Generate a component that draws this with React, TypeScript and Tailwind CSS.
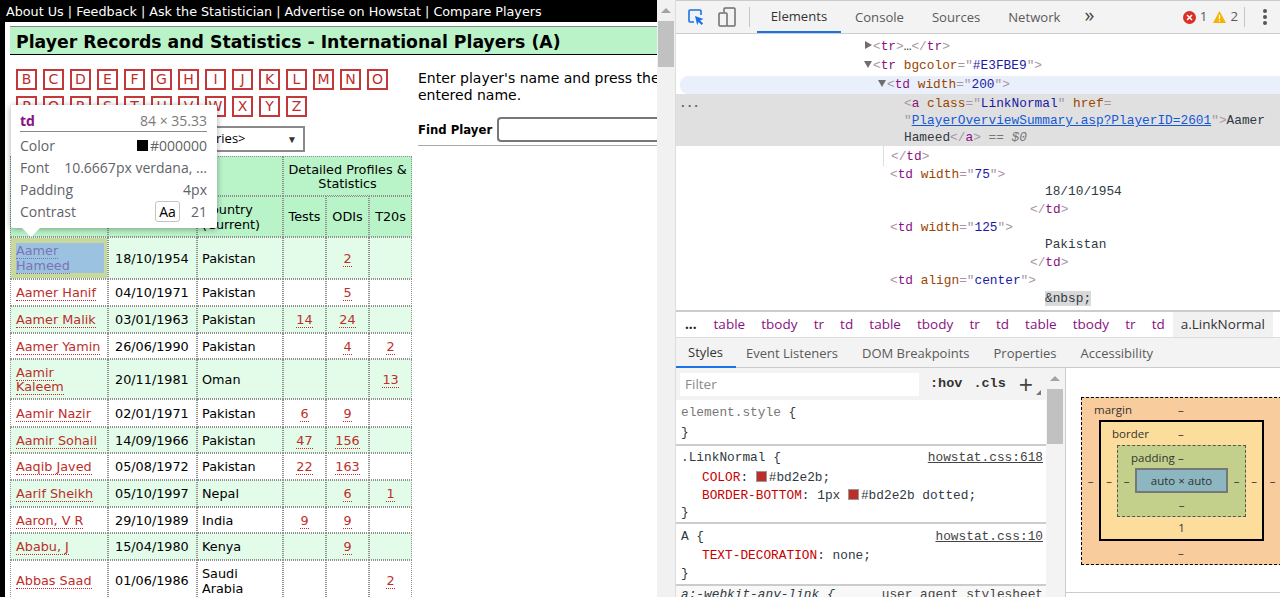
import React from "react";

const sans = "font-['DejaVu_Sans',sans-serif]";
const ui = "font-['Open_Sans',sans-serif]";
const mono = "font-['Liberation_Mono',monospace]";

const row1 = ["B","C","D","E","F","G","H","I","J","K","L","M","N","O"];
const row2 = ["P","Q","R","S","T","U","V","W","X","Y","Z"];

const rows: [string, string, string, string, string, string, string][] = [
  ["Aamer Hanif","04/10/1971","Pakistan","","5","","h-[27px]"],
  ["Aamer Malik","03/01/1963","Pakistan","14","24","","h-[27px]"],
  ["Aamer Yamin","26/06/1990","Pakistan","","4","2","h-[26px]"],
  ["Aamir Kaleem","20/11/1981","Oman","","","13","h-[40px]"],
  ["Aamir Nazir","02/01/1971","Pakistan","6","9","","h-[28px]"],
  ["Aamir Sohail","14/09/1966","Pakistan","47","156","","h-[26px]"],
  ["Aaqib Javed","05/08/1972","Pakistan","22","163","","h-[27px]"],
  ["Aarif Sheikh","05/10/1997","Nepal","","6","1","h-[27px]"],
  ["Aaron, V R","29/10/1989","India","9","9","","h-[26px]"],
  ["Ababu, J","15/04/1980","Kenya","","9","","h-[27px]"],
  ["Abbas Saad","01/06/1986","Saudi Arabia","","","2","h-[41px]"],
];

const cell = "border border-dotted border-[#909090] px-[4px] pt-[2px] pb-0 align-middle";

function L({ children }: { children: React.ReactNode }) {
  return <span className="text-[#bd2e2b] border-b border-dotted border-[#bd2e2b]">{children}</span>;
}

function Letter({ c }: { c: string }) {
  return (
    <span className="w-[21px] h-[21px] flex items-center justify-center border-2 border-[#c4383a] text-[#bd2e2b] text-[14px]">{c}</span>
  );
}

function Table() {
  return (
    <table className="table-fixed border-separate border-spacing-0 w-[402px] text-[12.8px] leading-[14.5px] text-black">
      <colgroup>
        <col className="w-[98px]" /><col className="w-[89px]" /><col className="w-[86px]" /><col className="w-[43px]" /><col className="w-[43px]" /><col className="w-[43px]" />
      </colgroup>
      <tbody>
        <tr className="bg-[#b9f3c8] h-[40px]">
          <td className={cell} colSpan={3}></td>
          <td className={cell + " text-center"} colSpan={3}>Detailed Profiles &amp; Statistics</td>
        </tr>
        <tr className="bg-[#b9f3c8] h-[41px]">
          <td className={cell}></td>
          <td className={cell}></td>
          <td className={cell}>Country (Current)</td>
          <td className={cell + " text-center"}>Tests</td>
          <td className={cell + " text-center"}>ODIs</td>
          <td className={cell + " text-center"}>T20s</td>
        </tr>
        <tr className="bg-[#e3fbe9] h-[42px]">
          <td className={cell + " !p-0"}>
            <div className="bg-[#c8d99b] pl-[5px] pr-[3px] py-[5px] h-[40px]">
              <div className="bg-[#9bc2e0] h-[30px] pt-[1px] text-[#7d72b8]"><span className="border-b border-dotted border-[#7d72b8]">Aamer</span><br /><span className="border-b border-dotted border-[#7d72b8]">Hameed</span></div>
            </div>
          </td>
          <td className={cell + " !pl-[6px]"}>18/10/1954</td>
          <td className={cell}>Pakistan</td>
          <td className={cell}></td>
          <td className={cell + " text-center"}><L>2</L></td>
          <td className={cell}></td>
        </tr>
        {rows.map((r, i) => (
          <tr key={r[0]} className={(i % 2 === 0 ? "bg-white " : "bg-[#e3fbe9] ") + r[6]}>
            <td className={cell + " !pl-[5px]"}><L>{r[0]}</L></td>
            <td className={cell + " !pl-[6px]"}>{r[1]}</td>
            <td className={cell}>{r[2]}</td>
            <td className={cell + " text-center"}>{r[3] && <L>{r[3]}</L>}</td>
            <td className={cell + " text-center"}>{r[4] && <L>{r[4]}</L>}</td>
            <td className={cell + " text-center"}>{r[5] && <L>{r[5]}</L>}</td>
          </tr>
        ))}
      </tbody>
    </table>
  );
}

function Tip() {
  const lbl = "text-[#5f6368]";
  return (
    <div className={`absolute left-[11px] top-[105px] w-[206px] h-[123px] bg-white rounded-[2px] shadow-[0_1px_6px_rgba(0,0,0,0.35)] pl-[9px] pr-[10px] pt-[4px] text-[14px] ${ui} z-10`}>
      <div className="flex justify-between items-center h-[23px] border-b border-[#8a8a8a]">
        <span className="font-bold text-[#881280]">td</span>
        <span className="text-[#7a7a7a]">84 × 35.33</span>
      </div>
      <div className="flex justify-between items-center h-[22px] mt-[2px]">
        <span className={lbl}>Color</span>
        <span className="flex items-center gap-[2px] text-[#5f6368]"><span className="w-[11px] h-[11px] bg-black inline-block" />#000000</span>
      </div>
      <div className="flex justify-between items-center h-[22px]">
        <span className={lbl}>Font</span>
        <span className="text-[#5f6368]">10.6667px verdana, ...</span>
      </div>
      <div className="flex justify-between items-center h-[22px]">
        <span className={lbl}>Padding</span>
        <span className="text-[#5f6368]">4px</span>
      </div>
      <div className="flex justify-between items-center h-[22px]">
        <span className={lbl}>Contrast</span>
        <span className="flex items-center gap-[11px] text-[#5f6368]"><span className="w-[25px] h-[21px] border border-[#c4c4c4] rounded-[3px] text-black flex items-center justify-center">Aa</span>21</span>
      </div>
      <div className="absolute left-[11px] top-[123px] w-0 h-0 border-l-[9px] border-r-[9px] border-t-[9px] border-l-transparent border-r-transparent border-t-white" />
    </div>
  );
}

function LeftPage() {
  return (
    <div className={`relative w-[657px] h-[597px] overflow-hidden bg-white ${sans}`}>
      <div className="bg-black text-white h-[22px] pl-[6px] text-[12.75px] leading-[23px] whitespace-nowrap">
        About Us | Feedback | Ask the Statistician | Advertise on Howstat | Compare Players
      </div>
      <div className="flex h-[575px]">
        <div className="w-[5px] bg-black shrink-0" />
        <div className="pl-[5px] pt-[4px] flex-1 min-w-0">
          <div className="h-[29px] bg-[#bbf3c9] border-t border-[#888] border-b border-b-black pl-[6px] font-bold text-[17.3px] leading-[31px] whitespace-nowrap overflow-hidden">
            Player Records and Statistics - International Players (A)
          </div>
          <div className="flex">
            <div className="w-[408px] shrink-0">
              <div className="pl-[6px] pt-[14px]">
                <div className="flex gap-[6px]">{row1.map((c) => <Letter key={c} c={c} />)}</div>
                <div className="flex gap-[6px] mt-[6px]">{row2.map((c) => <Letter key={c} c={c} />)}</div>
                <div className={`mt-[9px] w-[289px] h-[26px] border-2 border-[#8a8a8a] flex items-center justify-between pl-[4px] pr-[6px] text-[13px] whitespace-nowrap ${ui}`}>
                  <span className="pl-[194px]">ries&gt;</span>
                  <span className="text-[10px] text-[#333]">▼</span>
                </div>
              </div>
              <div className="mt-[4px]"><Table /></div>
            </div>
            <div className="flex-1 min-w-0 pt-[15px] text-[14px] leading-[17px] text-black whitespace-nowrap overflow-hidden">
              <div>Enter player's name and press the</div>
              <div>entered name.</div>
              <div className="flex items-center mt-[13px] pb-[3px] border-b border-[#aaa]">
                <span className="font-bold text-[11.7px] w-[79px] pt-[1px]">Find Player</span>
                <span className="flex-1 h-[25px] border-2 border-[#777] border-r-0 rounded-l-[4px]" />
              </div>
            </div>
          </div>
        </div>
      </div>
      <Tip />
    </div>
  );
}

function PageScroll() {
  return (
    <div className="w-[19px] shrink-0 bg-[#f1f1f1] border-r border-[#ddd] flex flex-col items-center">
      <div className="h-[21px] flex items-center justify-center">
        <div className="w-0 h-0 border-l-[5px] border-r-[5px] border-b-[5px] border-l-transparent border-r-transparent border-b-[#a3a3a3]" />
      </div>
      <div className="w-[16px] h-[46px] bg-[#c1c1c1]" />
    </div>
  );
}

function T({ c, children }: { c: string; children: React.ReactNode }) {
  return <span className={c}>{children}</span>;
}
const P = "text-[#a894a6]";
const N = "text-[#881280]";
const A = "text-[#994500]";
const V = "text-[#1a1aa6]";

function Tag({ name, attr, val, close }: { name: string; attr?: string; val?: string; close?: boolean }) {
  return (
    <>
      <T c={P}>{close ? "</" : "<"}</T><T c={N}>{name}</T>
      {attr && <> <T c={A}>{attr}</T><T c={P}>="</T><T c={V}>{val}</T><T c={P}>"</T></>}
      <T c={P}>&gt;</T>
    </>
  );
}

function Line({ cls, children }: { cls: string; children: React.ReactNode }) {
  return <div className={`h-[17.7px] leading-[17.7px] whitespace-nowrap ${cls}`}>{children}</div>;
}

const Tri = ({ open }: { open?: boolean }) => (
  <span className={`inline-block w-0 h-0 mr-[1px] align-[1px] ${open ? "border-l-[4.5px] border-r-[4.5px] border-t-[7px] border-l-transparent border-r-transparent border-t-[#6e6e6e]" : "border-t-[4.5px] border-b-[4.5px] border-l-[7px] border-t-transparent border-b-transparent border-l-[#6e6e6e]"}`} />
);

function Toolbar() {
  const tab = "px-[14px] h-full flex items-center text-[13.1px] text-[#5a5a5a] pt-[2px]";
  return (
    <div className={`h-[34px] border-t border-[#ccc] bg-[#f3f3f3] border-b border-b-[#ccc] flex items-center ${ui}`}>
      <div className="w-[73px] flex items-center gap-[13px] pl-[11px] h-full">
        <svg width="18" height="18" viewBox="0 0 18 18" fill="none">
          <path d="M7 14H3a1 1 0 0 1-1-1V3a1 1 0 0 1 1-1h10a1 1 0 0 1 1 1v4" stroke="#1a73e8" strokeWidth="1.6" />
          <path d="M8 8l8.5 3-3.4 1.4 3 3-1.5 1.5-3-3L10.2 17z" fill="#1a73e8" />
        </svg>
        <svg width="18" height="20" viewBox="0 0 18 20" fill="none" stroke="#6e6e6e" strokeWidth="1.5">
          <path d="M6 5V2a1 1 0 0 1 1-1h9a1 1 0 0 1 1 1v16a1 1 0 0 1-1 1H9" />
          <rect x="1" y="6" width="8" height="13" rx="1" />
        </svg>
      </div>
      <div className="w-px h-[20px] bg-[#c4c4c4]" />
      <div className="flex h-full ml-[7px]">
        <div className={tab + " !text-[#333] border-b-2 border-[#1a73e8] w-[84px] justify-center !px-0"}>Elements</div>
        <div className={tab}>Console</div>
        <div className={tab}>Sources</div>
        <div className={tab}>Network</div>
      </div>
      <span className="ml-[10px] text-[#444] text-[20px] leading-none pb-[4px]">»</span>
      <div className="ml-auto flex items-center text-[13.3px] text-[#5a5a5a] pr-[13px]">
        <svg width="13" height="13" viewBox="0 0 13 13" className="mr-[4px]"><circle cx="6.5" cy="6.5" r="6.5" fill="#d93025" /><path d="M4 4l5 5M9 4l-5 5" stroke="#fff" strokeWidth="1.5" /></svg>
        <span>1</span>
        <svg width="13" height="12" viewBox="0 0 13 12" className="ml-[6px] mr-[4px]"><path d="M6.5 0L13 12H0z" fill="#f5b400" /><path d="M6.5 4v4M6.5 9v1.5" stroke="#fff" strokeWidth="1.3" /></svg>
        <span>2</span>
        <div className="w-px h-[20px] bg-[#c4c4c4] ml-[6px] mr-[18px]" />
        <svg width="4" height="16" viewBox="0 0 4 16" fill="#555"><circle cx="2" cy="2" r="2" /><circle cx="2" cy="8" r="2" /><circle cx="2" cy="14" r="2" /></svg>
      </div>
    </div>
  );
}

function DomTree() {
  return (
    <div className={`h-[276px] overflow-hidden pt-[4px] text-[12.8px] text-[#303942] ${mono}`}>
      <Line cls="pl-[189px] !h-[19px]"><Tri /><Tag name="tr" /><T c="text-[#303942]">…</T><Tag name="tr" close /></Line>
      <Line cls="pl-[188px] !h-[19px]"><Tri open /><Tag name="tr" attr="bgcolor" val="#E3FBE9" /></Line>
      <div className="ml-[4px] bg-[#e9f0fb] rounded-l-[8px] h-[18px]">
        <Line cls="pl-[198px]"><Tri open /><Tag name="td" attr="width" val="200" /></Line>
      </div>
      <div className="relative bg-[#e0e0e0] h-[52px] pt-[1px]">
        <span className="absolute left-[3px] top-[0px] text-[#666] font-bold tracking-[-1px]">...</span>
        <Line cls="pl-[228px] !h-[17px]"><T c={P}>&lt;</T><T c={N}>a</T> <T c={A}>class</T><T c={P}>="</T><T c={V}>LinkNormal</T><T c={P}>"</T> <T c={A}>href</T><T c={P}>=</T></Line>
        <Line cls="pl-[228px] !h-[17px]"><T c={P}>"</T><span className="text-[#1558d6] underline">PlayerOverviewSummary.asp?PlayerID=2601</span><T c={P}>"</T><T c={P}>&gt;</T>Aamer</Line>
        <Line cls="pl-[228px] !h-[17px]">Hameed<Tag name="a" close /> <i className="text-[#777]">== $0</i></Line>
      </div>
      <div className="ml-[207px] border-l border-[#ddd] pt-[2px]">
        <Line cls="pl-[7px]"><Tag name="td" close /></Line>
      </div>
      <Line cls="pl-[214px]"><Tag name="td" attr="width" val="75" /></Line>
      <Line cls="pl-[369px]">18/10/1954</Line>
      <Line cls="pl-[354px]"><Tag name="td" close /></Line>
      <Line cls="pl-[214px]"><Tag name="td" attr="width" val="125" /></Line>
      <Line cls="pl-[369px]">Pakistan</Line>
      <Line cls="pl-[354px]"><Tag name="td" close /></Line>
      <Line cls="pl-[214px]"><Tag name="td" attr="align" val="center" /></Line>
      <Line cls="pl-[369px]"><span className="bg-[#d9d9d9]">&amp;nbsp;</span></Line>
    </div>
  );
}

function Crumbs() {
  const items = ["table","tbody","tr","td","table","tbody","tr","td","table","tbody","tr","td"];
  return (
    <div className={`h-[28px] border-t-2 border-[#ccc] border-b border-b-[#ddd] flex items-center text-[13.5px] text-[#881280] pl-[9px] ${ui}`}>
      <span className="font-bold text-[#222] mr-[17px]">...</span>
      <div className="flex gap-[16.15px]">{items.map((s, i) => <span key={i}>{s}</span>)}</div>
      <span className="ml-[8px] px-[8px] h-full bg-[#f1f1f1] text-[#333] flex items-center">a.LinkNormal</span>
    </div>
  );
}

function StyleTabs() {
  return (
    <div className={`h-[30px] bg-[#f3f3f3] border-b border-[#ccc] flex text-[13px] text-[#5a5a5a] ${ui}`}>
      <div className="w-[60px] pl-[12px] pt-[2px] text-[#333] border-b-2 border-[#1a73e8] h-[30px] flex items-center">Styles</div>
      <div className="flex items-center gap-[24px] pl-[10px] pt-[2px]">
        <span>Event Listeners</span><span>DOM Breakpoints</span><span>Properties</span><span>Accessibility</span>
      </div>
    </div>
  );
}

const Sw = () => <span className="inline-block w-[11px] h-[11px] bg-[#bd2e2b] border border-[#999] mr-[2px] align-[-1px]" />;
const R = "text-[#c80000]";

function Sec({ cls, children }: { cls: string; children: React.ReactNode }) {
  return <div className={`border-b-2 border-[#ccc] bg-white pl-[5px] pr-[3px] overflow-hidden ${cls}`}>{children}</div>;
}

function Styles() {
  return (
    <div className="w-[390px] shrink-0 flex bg-[#f3f3f3] border-r border-[#ccc]">
      <div className="w-[370px] shrink-0 flex flex-col">
        <div className={`h-[32px] flex items-center pl-[4px] pt-[1px] ${ui}`}>
          <div className="w-[239px] h-[23px] bg-white pl-[5px] flex items-center text-[13.5px] text-[#8a8a8a]">Filter</div>
          <span className={`ml-[11px] font-bold text-[13.5px] text-[#333] ${mono}`}>:hov</span>
          <span className={`ml-[11px] font-bold text-[13.5px] text-[#333] ${mono}`}>.cls</span>
          <span className="relative ml-[13px] text-[#444] text-[25px] leading-none font-normal">+<span className="absolute right-[-8px] bottom-[2px] w-0 h-0 border-l-[5px] border-t-[5px] border-l-transparent border-t-transparent border-b-0 border-r-[5px] border-r-[#777]" /></span>
        </div>
        <div className={`flex-1 text-[12.8px] leading-[18px] text-[#303942] ${mono}`}>
          <Sec cls="h-[46px]">
            <div className="pt-[4px] text-[#777]">element.style <span className="text-[#303942]">{"{"}</span></div>
            <div className="pt-[2px]">{"}"}</div>
          </Sec>
          <Sec cls="h-[78px]">
            <div className="pt-[3px] flex justify-between"><span>.LinkNormal {"{"}</span><span className="underline text-[#444]">howstat.css:618</span></div>
            <div className="pl-[21px] pt-[2px]"><T c={R}>COLOR</T>: <Sw />#bd2e2b;</div>
            <div className="pl-[21px] leading-[17px]"><T c={R}>BORDER-BOTTOM</T>: 1px <Sw />#bd2e2b dotted;</div>
            <div className="leading-[17px]">{"}"}</div>
          </Sec>
          <Sec cls="h-[62px]">
            <div className="pt-[4px] flex justify-between"><span>A {"{"}</span><span className="underline text-[#444]">howstat.css:10</span></div>
            <div className="pl-[21px] pt-[1px]"><T c={R}>TEXT-DECORATION</T>: none;</div>
            <div>{"}"}</div>
          </Sec>
          <div className="h-[11px] pl-[5px] bg-[#f8f8f8] overflow-hidden flex justify-between pr-[3px] leading-[18px]"><i>a:-webkit-any-link {"{"}</i><span className="text-[#444]">user agent stylesheet</span></div>
        </div>
      </div>
      <div className="w-[19px] flex flex-col pl-[1px]">
        <div className="h-[21px] w-[16px] flex items-center justify-center">
          <div className="w-0 h-0 border-l-[5px] border-r-[5px] border-b-[5px] border-l-transparent border-r-transparent border-b-[#a3a3a3]" />
        </div>
        <div className="w-[16px] h-[55px] bg-[#c1c1c1]" />
      </div>
    </div>
  );
}

function BoxModel() {
  return (
    <div className={`flex-1 bg-white pt-[29px] h-[225px] border-b border-[#ccc] text-[11.5px] text-[#333] ${ui}`}>
      <div className="ml-[15px] h-[168px] bg-[#f9cc9d] border border-dashed border-black flex flex-col">
        <div className="h-[22px] pt-[2px] flex items-center relative"><span className="pl-[12px]">margin</span><span className="absolute left-[96px]">–</span></div>
        <div className="flex items-center h-[121px]">
          <span className="text-center w-[17px] shrink-0">–</span>
          <div className="w-[165px] h-[121px] bg-[#fddd9b] border-2 border-black flex flex-col shrink-0">
            <div className="h-[23px] pt-[1px] flex items-center relative"><span className="pl-[11px]">border</span><span className="absolute left-[77px]">–</span></div>
            <div className="flex items-center h-[72px]">
              <span className="text-center w-[16px] shrink-0">–</span>
              <div className="w-[129px] h-[72px] bg-[#c3d08b] border border-dashed border-[#555] flex flex-col shrink-0">
                <div className="h-[22px] pt-[2px] flex items-center relative"><span className="pl-[13px]">padding</span><span className="absolute left-[60px]">–</span></div>
                <div className="flex items-center">
                  <span className="text-center w-[17px] shrink-0">–</span>
                  <div className="w-[93px] h-[25px] bg-[#8cb6c0] border-2 border-[#777] flex items-center justify-center shrink-0">auto × auto</div>
                  <span className="text-center w-[17px] shrink-0">–</span>
                </div>
                <div className="flex-1 flex items-center justify-center">–</div>
              </div>
              <span className="text-center w-[16px] shrink-0">–</span>
            </div>
            <div className="h-[22px] flex items-center justify-center">1</div>
          </div>
          <span className="text-center w-[17px] shrink-0">–</span>
        </div>
        <div className="h-[23px] flex items-center pl-[96px]">–</div>
      </div>
    </div>
  );
}

function Devtools() {
  return (
    <div className="flex-1 min-w-0 h-[597px] overflow-hidden bg-white flex flex-col">
      <Toolbar />
      <DomTree />
      <Crumbs />
      <StyleTabs />
      <div className="flex flex-1 min-h-0">
        <Styles />
        <BoxModel />
      </div>
    </div>
  );
}

export default function App() {
  return (
    <div className="flex w-[1280px] h-[597px] overflow-hidden bg-white">
      <LeftPage />
      <PageScroll />
      <Devtools />
    </div>
  );
}
